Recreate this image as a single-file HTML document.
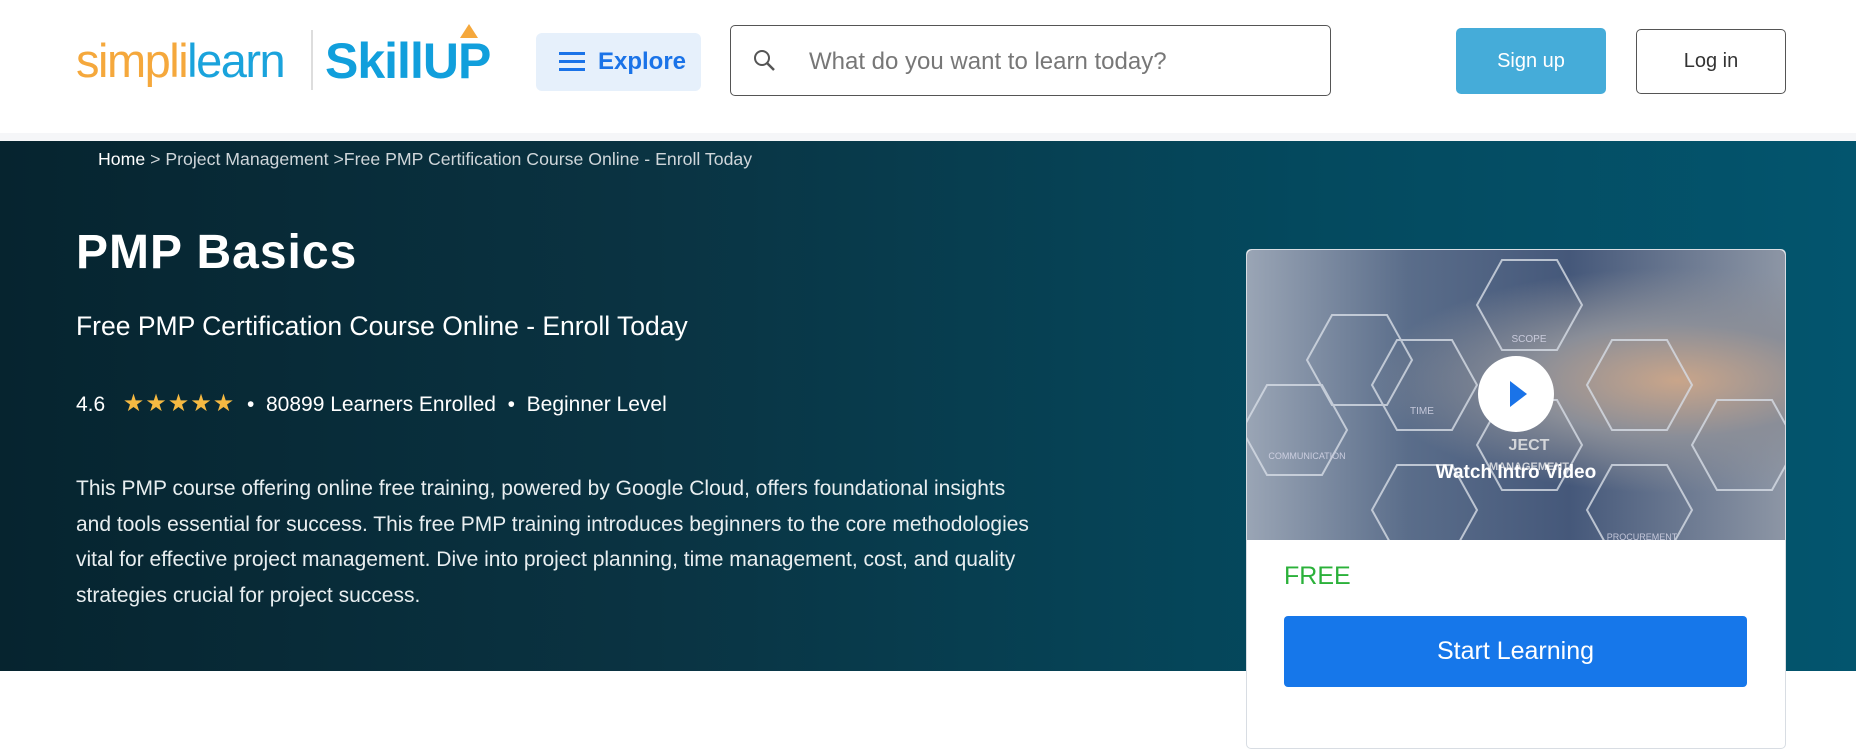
<!DOCTYPE html>
<html><head><meta charset="utf-8"><style>
*{margin:0;padding:0;box-sizing:border-box}
body{width:1856px;height:741px;overflow:hidden;font-family:"Liberation Sans",sans-serif;background:#fff;position:relative}
.hdr{position:absolute;left:0;top:0;width:1856px;height:133px;background:#fff}
.strip{position:absolute;left:0;top:133px;width:1856px;height:8px;background:#f5f6f8}
.band{position:absolute;left:0;top:141px;width:1856px;height:530px;background:linear-gradient(90deg,#06242f 0%,#0a3342 35%,#04495e 70%,#03556e 100%)}
.a{position:absolute}
</style></head><body>
<div class="hdr"></div>
<div class="a" style="left:76px;top:36px;font-size:47px;color:#f5a83c;letter-spacing:-1.5px;line-height:50px">simpl<span style="color:#f5a83c">i</span><span style="color:#1aa3dc">learn</span></div>
<div class="a" style="left:311px;top:30px;width:2px;height:60px;background:#ddd"></div>
<div class="a" style="left:325px;top:33px;font-size:50px;font-weight:bold;color:#119fdc;line-height:56px;letter-spacing:-1px">SkillUP</div>
<div class="a" style="left:460px;top:24px;width:0;height:0;border-left:9px solid transparent;border-right:9px solid transparent;border-bottom:14px solid #f5a83c"></div>
<div class="a" style="left:536px;top:33px;width:165px;height:58px;background:#e6f0fb;border-radius:6px"></div>
<div class="a" style="left:559px;top:52px;width:26px;height:3px;background:#1a73e8;box-shadow:0 8px 0 #1a73e8,0 16px 0 #1a73e8"></div>
<div class="a" style="left:598px;top:48px;font-size:24px;color:#1a73e8;font-weight:bold">Explore</div>
<div class="a" style="left:730px;top:25px;width:601px;height:71px;border:1px solid #555;border-radius:5px"></div>
<svg class="a" style="left:752px;top:48px" width="26" height="26" viewBox="0 0 26 26"><circle cx="10" cy="10" r="7" fill="none" stroke="#555" stroke-width="2"/><path d="M15 15l7 7" stroke="#555" stroke-width="2.5"/></svg>
<div class="a" style="left:809px;top:48px;font-size:24px;color:#777">What do you want to learn today?</div>
<div class="a" style="left:1456px;top:28px;width:150px;height:66px;background:#45acd9;border-radius:5px;color:#fff;font-size:20px;text-align:center;line-height:66px">Sign up</div>
<div class="a" style="left:1636px;top:29px;width:150px;height:65px;border:1px solid #555;border-radius:5px;color:#333;font-size:20px;text-align:center;line-height:63px">Log in</div>
<div class="strip"></div>
<div class="band"></div>
<div class="a" style="left:98px;top:149px;font-size:17.7px;color:#cfd6da;white-space:nowrap"><span style="color:#fff">Home</span> &gt; Project Management &gt;Free PMP Certification Course Online - Enroll Today</div>
<div class="a" style="left:76px;top:225px;font-size:48px;font-weight:bold;color:#fff;letter-spacing:1px">PMP Basics</div>
<div class="a" style="left:76px;top:311px;font-size:26.5px;color:#fff;white-space:nowrap">Free PMP Certification Course Online - Enroll Today</div>
<div class="a" style="left:76px;top:389px;font-size:21px;color:#fff;white-space:nowrap">4.6 &nbsp;&nbsp;<span style="color:#f5b942;font-size:24px;letter-spacing:1px">★★★★★</span> &nbsp;•&nbsp; 80899 Learners Enrolled &nbsp;•&nbsp; Beginner Level</div>
<div class="a" style="left:76px;top:471px;width:960px;font-size:21px;line-height:35.5px;color:#e8eef0">This PMP course offering online free training, powered by Google Cloud, offers foundational insights and tools essential for success. This free PMP training introduces beginners to the core methodologies vital for effective project management. Dive into project planning, time management, cost, and quality strategies crucial for project success.</div>
<div class="a" style="left:1246px;top:249px;width:540px;height:500px;background:#fff;border:1px solid #d8dde3;border-radius:5px"></div>
<div class="a" style="left:1247px;top:250px;width:538px;height:290px;border-radius:5px 5px 0 0;background:radial-gradient(ellipse at 80% 45%,#c9a58a 0%,#8a8e98 25%,transparent 50%),linear-gradient(90deg,#9aa5b5 0%,#5a6d8a 30%,#45587a 60%,#8d96a5 100%)"></div>
<svg class="a" style="left:1247px;top:250px" width="538" height="290" viewBox="0 0 538 290" fill="none" stroke="#d7dde6" stroke-width="2" opacity="0.8">
<path d="M85 65h55l25 45-25 45h-55l-25-45z"/><path d="M255 10h55l25 45-25 45h-55l-25-45z"/><path d="M150 90h55l25 45-25 45h-55l-25-45z"/><path d="M20 135h55l25 45-25 45h-55l-25-45z"/><path d="M365 90h55l25 45-25 45h-55l-25-45z"/><path d="M255 150h55l25 45-25 45h-55l-25-45z"/><path d="M150 215h55l25 45-25 45h-55l-25-45z"/><path d="M365 215h55l25 45-25 45h-55l-25-45z"/><path d="M470 150h55l25 45-25 45h-55l-25-45z"/>
<text x="282" y="92" fill="#dde" stroke="none" font-size="10" text-anchor="middle">SCOPE</text>
<text x="175" y="164" fill="#dde" stroke="none" font-size="10" text-anchor="middle">TIME</text>
<text x="60" y="209" fill="#dde" stroke="none" font-size="9" text-anchor="middle">COMMUNICATION</text>
<text x="282" y="200" fill="#eee" stroke="none" font-size="16" font-weight="bold" text-anchor="middle">JECT</text>
<text x="282" y="220" fill="#eee" stroke="none" font-size="11" font-weight="bold" text-anchor="middle">MANAGEMENT</text>
<text x="395" y="290" fill="#dde" stroke="none" font-size="9" text-anchor="middle">PROCUREMENT</text>
</svg>
<div class="a" style="left:1478px;top:356px;width:76px;height:76px;border-radius:50%;background:#fff"></div>
<div class="a" style="left:1510px;top:381px;width:0;height:0;border-top:13px solid transparent;border-bottom:13px solid transparent;border-left:17px solid #1a73e8"></div>
<div class="a" style="left:1247px;top:462px;width:538px;text-align:center;font-size:19px;font-weight:bold;color:#fff">Watch Intro Video</div>
<div class="a" style="left:1284px;top:562px;font-size:25px;color:#2bb13a">FREE</div>
<div class="a" style="left:1284px;top:616px;width:463px;height:71px;background:#1677ea;border-radius:4px;color:#fff;font-size:25px;text-align:center;line-height:71px">Start Learning</div>
</body></html>
